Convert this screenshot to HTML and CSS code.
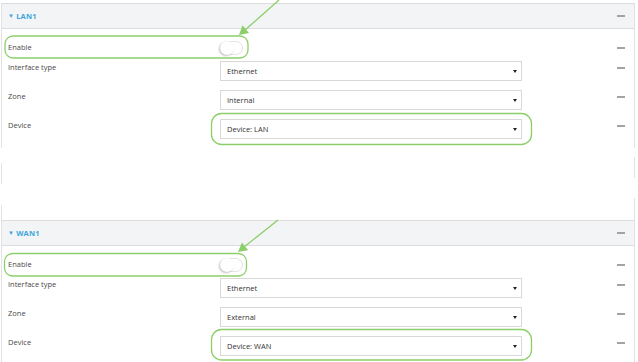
FILE: index.html
```html
<!DOCTYPE html>
<html>
<head>
<meta charset="utf-8">
<link rel="stylesheet" href="styles.css">
</head>
<body>
<div class="page">
  <section class="panel panel-lan">
    <div class="panel-head">
      <span class="title"><span class="caret">▼</span>LAN1</span>
      <span class="minus"></span>
    </div>
    <div class="panel-body">
      <div class="row row-enable">
        <span class="label">Enable</span>
        <span class="ctl"><span class="toggle"><span class="knob"></span></span></span>
        <span class="minus"></span>
      </div>
      <div class="row">
        <span class="label">Interface type</span>
        <span class="ctl"><span class="select">Ethernet<span class="tri"></span></span></span>
        <span class="minus"></span>
      </div>
      <div class="row">
        <span class="label">Zone</span>
        <span class="ctl"><span class="select">Internal<span class="tri"></span></span></span>
        <span class="minus"></span>
      </div>
      <div class="row">
        <span class="label">Device</span>
        <span class="ctl"><span class="select">Device: LAN<span class="tri"></span></span></span>
        <span class="minus"></span>
      </div>
    </div>
  </section>

  <div class="gap">
    <div class="gap-col gap-left">
      <span class="seg seg-l1"></span>
      <span class="seg seg-l2"></span>
    </div>
    <div class="gap-col gap-right">
      <span class="seg seg-r1"></span>
      <span class="seg seg-r2"></span>
    </div>
  </div>

  <section class="panel panel-wan">
    <div class="panel-head">
      <span class="title"><span class="caret">▼</span>WAN1</span>
      <span class="minus"></span>
    </div>
    <div class="panel-body">
      <div class="row row-enable">
        <span class="label">Enable</span>
        <span class="ctl"><span class="toggle"><span class="knob"></span></span></span>
        <span class="minus"></span>
      </div>
      <div class="row">
        <span class="label">Interface type</span>
        <span class="ctl"><span class="select">Ethernet<span class="tri"></span></span></span>
        <span class="minus"></span>
      </div>
      <div class="row">
        <span class="label">Zone</span>
        <span class="ctl"><span class="select">External<span class="tri"></span></span></span>
        <span class="minus"></span>
      </div>
      <div class="row">
        <span class="label">Device</span>
        <span class="ctl"><span class="select">Device: WAN<span class="tri"></span></span></span>
        <span class="minus"></span>
      </div>
    </div>
  </section>

  <svg class="annot" width="638" height="362" viewBox="0 0 638 362">
    <g fill="none" stroke="#8ccf6a" stroke-width="1.3">
      <rect x="5" y="36" width="243" height="22" rx="8"/>
      <rect x="211.5" y="113.5" width="320" height="31" rx="10"/>
      <rect x="4.5" y="253.5" width="242" height="22.5" rx="8"/>
      <rect x="211.5" y="329.5" width="320" height="30.5" rx="10"/>
      <line x1="279" y1="0" x2="245" y2="30"/>
      <line x1="278" y1="220" x2="244" y2="247"/>
    </g>
    <g fill="#8ccf6a">
      <polygon points="239,35 249,32.9 242.5,25.3"/>
      <polygon points="238,252 248.2,250.3 241.9,242.5"/>
    </g>
  </svg>
</div>
</body>
</html>
```
FILE: styles.css
```css
* { box-sizing: border-box; }
html, body { margin: 0; padding: 0; background: #fff; }
body {
  font-family: "Open Sans", "Noto Sans", sans-serif;
  color: #444;
}
.page {
  position: relative;
  width: 638px;
  height: 362px;
  overflow: hidden;
  padding-top: 3px;
}
.panel {
  margin-left: 1px;
  width: 634px;
  border-left: 1px solid #e2e2e2;
  border-right: 1px solid #e2e2e2;
  border-top: 1px solid #dcdcdc;
}
.panel-head {
  height: 25px;
  background: #f3f4f5;
  border-bottom: 1px solid #dcdcdc;
  display: flex;
  align-items: center;
  padding-left: 6px;
}
.title {
  color: #3ea6dc;
  font-size: 7.5px;
  font-weight: 700;
  flex: 1;
  display: flex;
  align-items: center;
  letter-spacing: 0.2px;
}
.caret {
  font-size: 6px;
  margin-right: 2px;
}
.minus {
  width: 8px;
  height: 2px;
  background: #a3a3a3;
  margin-right: 9px;
  flex: none;
}
.panel-body {
  padding-left: 6px;
}
.row {
  display: flex;
  align-items: flex-start;
  height: 29px;
  padding-top: 3px;
}
.row-enable {
  height: 29px;
  padding-top: 12px;
}
.label {
  width: 212px;
  font-size: 7.5px;
  line-height: 11px;
  margin-top: 1px;
  color: #4a4a4a;
  flex: none;
}
.row .minus { margin-top: 6px; }
.row-enable .minus { margin-top: 6px; }
.ctl {
  width: 397px;
  flex: none;
}
.select {
  display: flex;
  align-items: center;
  width: 302px;
  height: 20px;
  border: 1px solid #d8d8d8;
  padding-left: 6px;
  font-size: 7.5px;
  color: #333;
  position: relative;
}
.tri {
  position: absolute;
  right: 4px;
  top: 8px;
  width: 0;
  height: 0;
  border-left: 2.5px solid transparent;
  border-right: 2.5px solid transparent;
  border-top: 3px solid #222;
}
.toggle {
  display: block;
  width: 23px;
  height: 14px;
  border: 1px solid #e4e4e4;
  border-radius: 7px;
  background: #fff;
  position: relative;
}
.knob {
  position: absolute;
  left: -1px;
  top: -1px;
  width: 14px;
  height: 14px;
  border-radius: 50%;
  background: #fff;
  box-shadow: -1px 1px 2px rgba(0,0,0,0.25);
}
.panel-lan .panel-body { height: 119px; }
.gap {
  height: 72px;
  display: flex;
  justify-content: space-between;
  padding-left: 1px;
  padding-right: 3px;
}
.gap-col {
  display: flex;
  flex-direction: column;
  width: 1px;
}
.seg {
  display: block;
  width: 1px;
  background: #e2e2e2;
}
.seg-l1 { margin-top: 15px; height: 21px; }
.seg-l2 { margin-top: 21px; height: 15px; }
.seg-r1 { margin-top: 9px; height: 21px; }
.seg-r2 { margin-top: 20px; height: 22px; }
.panel-wan { height: 200px; }
.annot {
  position: absolute;
  left: 0;
  top: 0;
  pointer-events: none;
}
```
